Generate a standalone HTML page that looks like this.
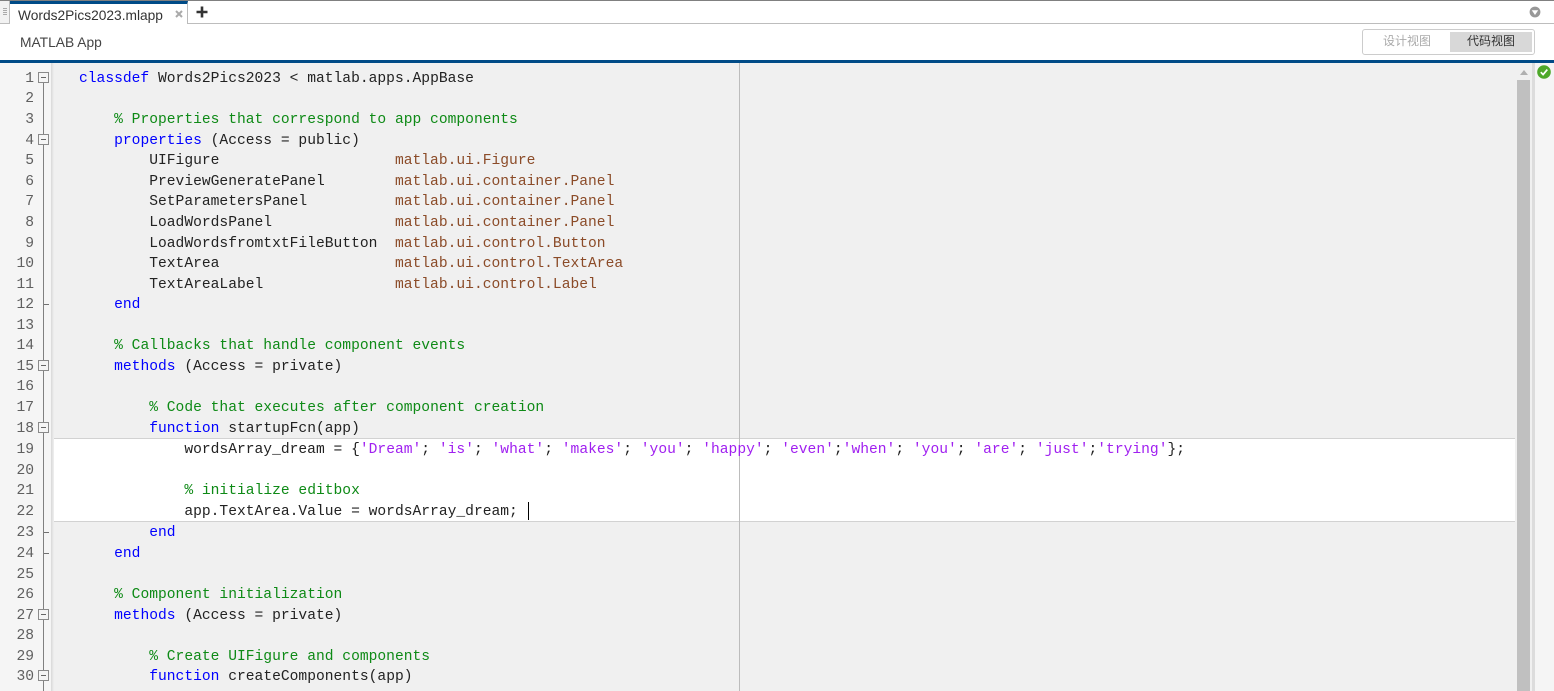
<!DOCTYPE html>
<html><head><meta charset="utf-8">
<style>
html,body{margin:0;padding:0;width:1554px;height:691px;overflow:hidden;background:#fff;font-family:"Liberation Sans","Noto Sans CJK SC",sans-serif}
div{position:absolute;box-sizing:border-box}
.l,.n{font-family:"Liberation Mono",monospace;font-size:14.63px;line-height:20px;height:20px;white-space:pre;color:#222;margin-top:1px}
.l{left:79px}
.n{left:0;width:34px;text-align:right;color:#606060;font-size:14.63px}
.k{color:#0000ff}.c{color:#0e8a16}.t{color:#8b4b28}.s{color:#a020f0}
.f{left:38px;width:11px;height:11px;border:1px solid #8a8a8a;background:#f5f5f5}
.f:after{content:"";position:absolute;left:2px;top:4px;width:5px;height:1px;background:#666}
.e{left:44px;width:5px;height:1px;background:#707070}
</style></head><body>
<!-- header -->
<div style="left:0;top:0;width:1554px;height:1px;background:#808080"></div>
<div style="left:0;top:23px;width:1554px;height:1px;background:#bdbdbd"></div>
<div style="left:0;top:1px;width:10px;height:22px;background:#f2f2f2;border-right:1px solid #bbb"></div>
<div style="left:3px;top:8px;width:4px;height:8px;background:repeating-linear-gradient(#aaa 0 1px,#f2f2f2 1px 2px)"></div>
<div style="left:10px;top:1px;width:178px;height:23px;background:#fff;border-top:3px solid #004b87;border-right:1px solid #bbb"></div>
<div style="left:18px;top:7px;font-size:13.75px;line-height:18px;color:#333;white-space:pre">Words2Pics2023.mlapp</div>
<svg style="position:absolute;left:174px;top:9px" width="10" height="10"><path d="M2 2L8 8M8 2L2 8" stroke="#aaa" stroke-width="2"/></svg>
<svg style="position:absolute;left:195px;top:5px" width="14" height="14"><path d="M7 1.5V12.5M1.5 7H12.5" stroke="#333" stroke-width="2.6"/></svg>
<svg style="position:absolute;left:1529px;top:6px" width="12" height="12"><circle cx="6" cy="6" r="5.4" fill="#989898"/><path d="M2.8 4.2H9.2L6 9Z" fill="#fff"/></svg>
<div style="left:20px;top:34px;font-size:13.8px;line-height:18px;color:#444;white-space:pre">MATLAB App</div>
<div style="left:1362px;top:29px;width:173px;height:26px;border:1px solid #ccc;border-radius:3px;background:#fff"></div>
<div style="left:1450px;top:32px;width:82px;height:20px;background:#d8d8d8"></div>
<div style="left:1383px;top:33px;font-size:12px;line-height:17px;color:#aaa">设计视图</div>
<div style="left:1467px;top:33px;font-size:12px;line-height:17px;color:#333">代码视图</div>
<div style="left:0;top:60px;width:1554px;height:3px;background:#004b87"></div>
<!-- editor -->
<div style="left:0;top:63px;width:1554px;height:628px;background:#f0f0f0"></div>
<div style="left:0;top:63px;width:51px;height:628px;background:#f5f5f5"></div>
<div style="left:51px;top:63px;width:3px;height:628px;background:linear-gradient(90deg,#d8d8d8,#f0f0f0)"></div>
<div style="left:54px;top:438px;width:1461px;height:84px;background:#fff;border-top:1px solid #d2d2d2;border-bottom:1px solid #d2d2d2"></div>
<div style="left:43px;top:83px;width:1px;height:608px;background:#808080"></div>
<div style="left:739px;top:63px;width:1px;height:628px;background:#bcbcbc"></div>
<div style="left:1516px;top:63px;width:17px;height:628px;background:#f0f0f0"></div>
<div style="left:1517px;top:80px;width:13px;height:611px;background:#c0c0c0"></div>
<svg style="position:absolute;left:1519px;top:69px" width="10" height="6"><path d="M1 6L5 1L9 6Z" fill="#b0b0b0"/></svg>
<div style="left:1532px;top:63px;width:3px;height:628px;background:#dcdcdc"></div>
<div style="left:1535px;top:63px;width:19px;height:628px;background:#f5f5f5"></div>
<svg style="position:absolute;left:1537px;top:65px" width="14" height="14"><circle cx="7" cy="7" r="6.8" fill="#4ea82a"/><path d="M3.8 7.2L6.1 9.6L10.3 4.6" stroke="#fff" stroke-width="1.7" fill="none"/></svg>
<!-- fold boxes -->
<div class="f" style="top:72px"></div><div class="f" style="top:134px"></div><div class="f" style="top:360px"></div><div class="f" style="top:422px"></div><div class="f" style="top:609px"></div><div class="f" style="top:670px"></div>
<div class="e" style="top:304px"></div><div class="e" style="top:532px"></div><div class="e" style="top:553px"></div>
<!-- numbers -->
<div class="n" style="top:68px">1</div><div class="n" style="top:88px">2</div><div class="n" style="top:109px">3</div><div class="n" style="top:130px">4</div><div class="n" style="top:150px">5</div><div class="n" style="top:171px">6</div><div class="n" style="top:191px">7</div><div class="n" style="top:212px">8</div><div class="n" style="top:233px">9</div><div class="n" style="top:253px">10</div><div class="n" style="top:274px">11</div><div class="n" style="top:294px">12</div><div class="n" style="top:315px">13</div><div class="n" style="top:335px">14</div><div class="n" style="top:356px">15</div><div class="n" style="top:376px">16</div><div class="n" style="top:397px">17</div><div class="n" style="top:418px">18</div><div class="n" style="top:439px">19</div><div class="n" style="top:460px">20</div><div class="n" style="top:480px">21</div><div class="n" style="top:501px">22</div><div class="n" style="top:522px">23</div><div class="n" style="top:543px">24</div><div class="n" style="top:564px">25</div><div class="n" style="top:584px">26</div><div class="n" style="top:605px">27</div><div class="n" style="top:625px">28</div><div class="n" style="top:646px">29</div><div class="n" style="top:666px">30</div>
<!-- code -->
<div class="l" style="top:68px"><span class="k">classdef</span> Words2Pics2023 &lt; matlab.apps.AppBase</div>
<div class="l" style="top:109px">    <span class="c">% Properties that correspond to app components</span></div>
<div class="l" style="top:130px">    <span class="k">properties</span> (Access = public)</div>
<div class="l" style="top:150px">        UIFigure                    <span class="t">matlab.ui.Figure</span></div>
<div class="l" style="top:171px">        PreviewGeneratePanel        <span class="t">matlab.ui.container.Panel</span></div>
<div class="l" style="top:191px">        SetParametersPanel          <span class="t">matlab.ui.container.Panel</span></div>
<div class="l" style="top:212px">        LoadWordsPanel              <span class="t">matlab.ui.container.Panel</span></div>
<div class="l" style="top:233px">        LoadWordsfromtxtFileButton  <span class="t">matlab.ui.control.Button</span></div>
<div class="l" style="top:253px">        TextArea                    <span class="t">matlab.ui.control.TextArea</span></div>
<div class="l" style="top:274px">        TextAreaLabel               <span class="t">matlab.ui.control.Label</span></div>
<div class="l" style="top:294px">    <span class="k">end</span></div>
<div class="l" style="top:335px">    <span class="c">% Callbacks that handle component events</span></div>
<div class="l" style="top:356px">    <span class="k">methods</span> (Access = private)</div>
<div class="l" style="top:397px">        <span class="c">% Code that executes after component creation</span></div>
<div class="l" style="top:418px">        <span class="k">function</span> startupFcn(app)</div>
<div class="l" style="top:439px">            wordsArray_dream = {<span class="s">'Dream'</span>; <span class="s">'is'</span>; <span class="s">'what'</span>; <span class="s">'makes'</span>; <span class="s">'you'</span>; <span class="s">'happy'</span>; <span class="s">'even'</span>;<span class="s">'when'</span>; <span class="s">'you'</span>; <span class="s">'are'</span>; <span class="s">'just'</span>;<span class="s">'trying'</span>};</div>
<div class="l" style="top:480px">            <span class="c">% initialize editbox</span></div>
<div class="l" style="top:501px">            app.TextArea.Value = wordsArray_dream;</div>
<div style="left:528px;top:502px;width:1px;height:18px;background:#000"></div>
<div class="l" style="top:522px">        <span class="k">end</span></div>
<div class="l" style="top:543px">    <span class="k">end</span></div>
<div class="l" style="top:584px">    <span class="c">% Component initialization</span></div>
<div class="l" style="top:605px">    <span class="k">methods</span> (Access = private)</div>
<div class="l" style="top:646px">        <span class="c">% Create UIFigure and components</span></div>
<div class="l" style="top:666px">        <span class="k">function</span> createComponents(app)</div>
</body></html>
